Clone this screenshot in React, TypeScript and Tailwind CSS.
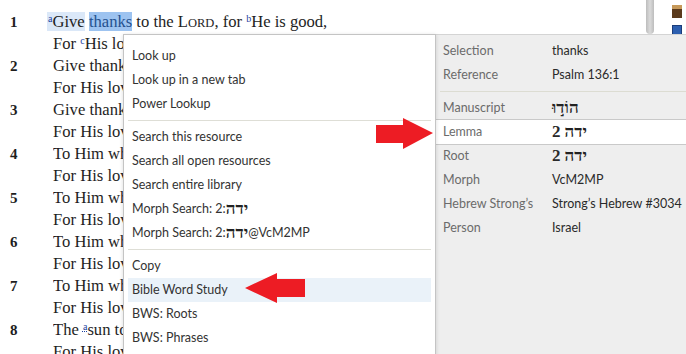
import React from "react";

const serif = { fontFamily: '"Liberation Serif", "DejaVu Serif", serif' };

const Sup = ({ children, className = "" }: { children: React.ReactNode; className?: string }) => (
	<sup className={"text-[10px] text-[#1b3fa0] " + className}>{children}</sup>
);

const Lord = () => (
	<span>
		L<span className="text-[12.5px]">ORD</span>
	</span>
);

const lines: { n?: string; body: React.ReactNode }[] = [
	{
		n: "1",
		body: (
			<>
				<span className="bg-[#dbe8f8] -ml-[6px] pl-[1px]">
					<Sup>a</Sup>Give
				</span>{" "}
				<span className="bg-[#9dc3f0] text-[#24518f]">thanks</span> to the <Lord />, for <Sup>b</Sup>He is good,
			</>
		),
	},
	{ body: <>For <Sup>c</Sup>His lovingkindness is everlasting.</> },
	{ n: "2", body: <>Give thanks to the God of gods,</> },
	{ body: <>For His lovingkindness is everlasting.</> },
	{ n: "3", body: <>Give thanks to the Lord of lords,</> },
	{ body: <>For His lovingkindness is everlasting.</> },
	{ n: "4", body: <>To Him who alone does great wonders,</> },
	{ body: <>For His lovingkindness is everlasting.</> },
	{ n: "5", body: <>To Him who made the heavens with skill,</> },
	{ body: <>For His lovingkindness is everlasting.</> },
	{ n: "6", body: <>To Him who spread out the earth above the waters,</> },
	{ body: <>For His lovingkindness is everlasting.</> },
	{ n: "7", body: <>To Him who made the great lights,</> },
	{ body: <>For His lovingkindness is everlasting.</> },
	{ n: "8", body: <>The <Sup className="underline decoration-dotted">a</Sup>sun to rule by day,</> },
	{ body: <>For His lovingkindness is everlasting.</> },
];

const Heb = ({ children }: { children: React.ReactNode }) => (
	<span dir="rtl" className="text-[17px] font-bold text-[#222]" style={serif}>
		{children}
	</span>
);

const MenuItem = ({ children, active = false }: { children: React.ReactNode; active?: boolean }) => (
	<div className={"h-[24px] flex items-center pl-[4px] whitespace-nowrap " + (active ? "bg-[#eaf2f9]" : "")}>
		{children}
	</div>
);

const Sep = () => <div className="h-px bg-[#deded6] my-[4px]" />;

const Row = ({ label, children, hl = false }: { label: string; children: React.ReactNode; hl?: boolean }) => (
	<div
		className={
			"h-[24px] flex items-center pl-[7px] whitespace-nowrap " +
			(hl ? "bg-white border-y border-[#c9c9c9] h-[26px] -my-px" : "")
		}>
		<span className="w-[109px] shrink-0 text-[#6b6b6b]">{label}</span>
		<span className="text-[#2a2a2a] flex items-center">{children}</span>
	</div>
);

export default function App() {
	return (
		<div className="relative w-[686px] h-[354px] overflow-hidden bg-white">
			{/* bible text */}
			<div className="pt-[11px] text-[16.6px] leading-[22px] text-[#1e1e1e]" style={serif}>
				{lines.map((l, i) => (
					<div key={i} className="flex whitespace-nowrap h-[22px]">
						<span className="w-[53px] shrink-0 pl-[10px] font-bold text-[15px]">{l.n}</span>
						<span className={i === 0 ? "" : "w-[70px] overflow-hidden"}>{l.body}</span>
					</div>
				))}
			</div>

			{/* scrollbar + resource icons */}
			<div className="absolute left-[646px] top-0 w-[8px] h-[34px] bg-gradient-to-r from-[#bdbdbd] via-[#dadada] to-[#bdbdbd] rounded-b-sm" />
			<div className="absolute left-[672px] top-[5px] w-[10px] h-[13px] bg-[#5b3a1c] border-t-[4px] border-[#c6995a]" />
			<div className="absolute left-[672px] top-[25px] w-[10px] h-[10px] bg-[#2c5fb0] border border-[#1c3d7a]" />

			{/* popup */}
			<div
				className="absolute left-[123px] top-[34px] right-0 h-[340px] flex text-[12.5px] text-[#333]"
				style={{ fontFamily: 'Lato, "Noto Sans", sans-serif' }}>
				<div className="w-[313px] bg-white border border-[#c4c4c4] shadow-[0_1px_4px_rgba(0,0,0,0.15)] px-[4px] pt-[9px] z-10">
					<MenuItem>Look up</MenuItem>
					<MenuItem>Look up in a new tab</MenuItem>
					<MenuItem>Power Lookup</MenuItem>
					<Sep />
					<MenuItem>Search this resource</MenuItem>
					<MenuItem>Search all open resources</MenuItem>
					<MenuItem>Search entire library</MenuItem>
					<MenuItem>
						Morph Search: 2:<Heb>ידה</Heb>
					</MenuItem>
					<MenuItem>
						Morph Search: 2:<Heb>ידה</Heb>@VcM2MP
					</MenuItem>
					<Sep />
					<MenuItem>Copy</MenuItem>
					<MenuItem active>Bible Word Study</MenuItem>
					<MenuItem>BWS: Roots</MenuItem>
					<MenuItem>BWS: Phrases</MenuItem>
				</div>
				<div className="flex-1 bg-[#eeeeee] border-t border-[#d4d4d4] pt-[4px]">
					<Row label="Selection">thanks</Row>
					<Row label="Reference">Psalm 136:1</Row>
					<div className="h-px bg-[#dcdcd2] ml-[4px] my-[4px]" />
					<Row label="Manuscript">
						<Heb>הוֹד֣וּ</Heb>
					</Row>
					<Row label="Lemma" hl>
						<span className="text-[17px] font-bold mr-[4px]" style={serif}>2</span>
						<Heb>ידה</Heb>
					</Row>
					<Row label="Root">
						<span className="text-[17px] font-bold mr-[4px]" style={serif}>2</span>
						<Heb>ידה</Heb>
					</Row>
					<Row label="Morph">VcM2MP</Row>
					<Row label="Hebrew Strong’s">Strong’s Hebrew #3034</Row>
					<Row label="Person">Israel</Row>
				</div>
			</div>

			{/* annotation arrows */}
			<svg className="absolute left-0 top-0 z-20 pointer-events-none" width="686" height="354">
				<polygon points="376,125 403,125 403,118 433,133 403,149 403,143 376,143" fill="#ed1c24" />
				<polygon points="305,279 277,279 277,273 245,288 277,303 277,297 305,297" fill="#ed1c24" />
			</svg>
		</div>
	);
}
